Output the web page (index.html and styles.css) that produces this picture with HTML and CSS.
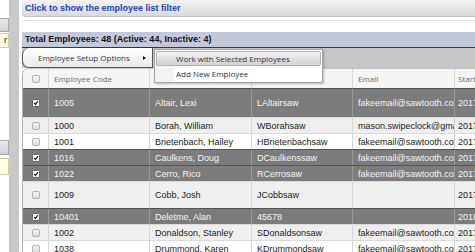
FILE: index.html
```html
<!DOCTYPE html>
<html>
<head>
<meta charset="utf-8">
<link rel="stylesheet" href="styles.css">
</head>
<body>
<div class="page">
  <aside class="side">
    <div class="side-btn btn-a"></div>
    <div class="side-note note-a">r</div>
    <div class="side-btn btn-b"></div>
    <div class="side-note note-b"></div>
  </aside>
  <div class="splitter"></div>
  <main class="main">
    <div class="banner">Click to show the employee list filter</div>
    <div class="rule"></div>
    <div class="total">Total Employees: 48 (Active: 44, Inactive: 4)</div>
    <div class="toolbar">
      <div class="menu-btn"><span>Employee Setup Options</span><span class="arrow"></span></div>
    </div>
    <div class="submenu">
      <div class="sub-item hover">Work with Selected Employees</div>
      <div class="sub-item">Add New Employee</div>
    </div>
    <div class="grid">
      <div class="row head">
        <div class="cell chk"><span class="cb"></span></div>
        <div class="cell">Employee Code</div>
        <div class="cell"></div>
        <div class="cell"></div>
        <div class="cell">Email</div>
        <div class="cell last">Start</div>
      </div>
      <div class="row sel tall">
        <div class="cell chk"><span class="cb on"><svg viewBox="0 0 8 8" width="8" height="8"><path d="M1.6 4.1 L3.3 5.9 L6.6 1.7" fill="none" stroke="#000" stroke-width="1.5"/></svg></span></div>
        <div class="cell">1005</div>
        <div class="cell">Altair, Lexi</div>
        <div class="cell">LAltairsaw</div>
        <div class="cell">fakeemail@sawtooth.com</div>
        <div class="cell last">2017</div>
      </div>
      <div class="row odd">
        <div class="cell chk"><span class="cb"></span></div>
        <div class="cell">1000</div>
        <div class="cell">Borah, William</div>
        <div class="cell">WBorahsaw</div>
        <div class="cell">mason.swipeclock@gmail.com</div>
        <div class="cell last">2017</div>
      </div>
      <div class="row">
        <div class="cell chk"><span class="cb"></span></div>
        <div class="cell">1001</div>
        <div class="cell">Brietenbach, Hailey</div>
        <div class="cell">HBrietenbachsaw</div>
        <div class="cell">fakeemail@sawtooth.com</div>
        <div class="cell last">2017</div>
      </div>
      <div class="row sel">
        <div class="cell chk"><span class="cb on"><svg viewBox="0 0 8 8" width="8" height="8"><path d="M1.6 4.1 L3.3 5.9 L6.6 1.7" fill="none" stroke="#000" stroke-width="1.5"/></svg></span></div>
        <div class="cell">1016</div>
        <div class="cell">Caulkens, Doug</div>
        <div class="cell">DCaulkenssaw</div>
        <div class="cell">fakeemail@sawtooth.com</div>
        <div class="cell last">2017</div>
      </div>
      <div class="row sel">
        <div class="cell chk"><span class="cb on"><svg viewBox="0 0 8 8" width="8" height="8"><path d="M1.6 4.1 L3.3 5.9 L6.6 1.7" fill="none" stroke="#000" stroke-width="1.5"/></svg></span></div>
        <div class="cell">1022</div>
        <div class="cell">Cerro, Rico</div>
        <div class="cell">RCerrosaw</div>
        <div class="cell">fakeemail@sawtooth.com</div>
        <div class="cell last">2017</div>
      </div>
      <div class="row odd mid">
        <div class="cell chk"><span class="cb"></span></div>
        <div class="cell">1009</div>
        <div class="cell">Cobb, Josh</div>
        <div class="cell">JCobbsaw</div>
        <div class="cell"></div>
        <div class="cell last">2017</div>
      </div>
      <div class="row sel">
        <div class="cell chk"><span class="cb on"><svg viewBox="0 0 8 8" width="8" height="8"><path d="M1.6 4.1 L3.3 5.9 L6.6 1.7" fill="none" stroke="#000" stroke-width="1.5"/></svg></span></div>
        <div class="cell">10401</div>
        <div class="cell">Deletme, Alan</div>
        <div class="cell">45678</div>
        <div class="cell"></div>
        <div class="cell last">2018</div>
      </div>
      <div class="row odd">
        <div class="cell chk"><span class="cb"></span></div>
        <div class="cell">1002</div>
        <div class="cell">Donaldson, Stanley</div>
        <div class="cell">SDonaldsonsaw</div>
        <div class="cell">fakeemail@sawtooth.com</div>
        <div class="cell last">2017</div>
      </div>
      <div class="row">
        <div class="cell chk"><span class="cb"></span></div>
        <div class="cell">1038</div>
        <div class="cell">Drummond, Karen</div>
        <div class="cell">KDrummondsaw</div>
        <div class="cell">fakeemail@sawtooth.com</div>
        <div class="cell last">2017</div>
      </div>
    </div>
  </main>
</div>
</body>
</html>
```
FILE: styles.css
```css
html, body { margin: 0; padding: 0; background: #fff; }
body { font-family: "Liberation Sans", Arial, sans-serif; }
.page { display: flex; height: 252px; overflow: hidden; }

.side { width: 9px; flex: none; overflow: hidden; display: flex; flex-direction: column; }
.side-btn { height: 14px; box-sizing: border-box; background: linear-gradient(#e8e8e8, #d2d2d2); border: 1px solid #a9a9a9; border-left: none; }
.btn-a { margin-top: 18px; }
.btn-b { margin-top: 92px; height: 15px; }
.side-note { height: 15px; box-sizing: border-box; background: #ffffe1; border: 1px solid #cfcfa8; border-left: none; margin-top: 1px; font: 9px/13px "Liberation Sans", sans-serif; color: #222; text-align: right; padding-right: 1px; }
.note-b { margin-top: 3px; height: 17px; }

.splitter { width: 10px; flex: none; background: #c9c9c9; margin-right: 3px; }

.main { flex: 1; min-width: 0; overflow: hidden; position: relative; }

.banner { height: 17px; box-sizing: border-box; padding-left: 3px; background: linear-gradient(#f3f3f3, #d9d9d9); border-bottom: 1px solid #c2c2c2; border-radius: 0 0 0 4px; color: #2143c4; font: bold 9px/16px "Liberation Sans", Arial, sans-serif; white-space: nowrap; }
.rule { height: 1px; background: #e4e4e4; margin-top: 3px; }
.total { margin-top: 11px; height: 15px; padding-left: 3px; background: #c3c9db; color: #111; font: bold 9px/15px "Liberation Sans", Arial, sans-serif; white-space: nowrap; }

.toolbar { border-top: 1px solid #383838; height: 20px; background: #c6c6c6; }
.menu-btn { width: 131px; height: 20px; box-sizing: border-box; border: 1px solid #595959; border-top: none; border-radius: 7px 0 0 7px; background: linear-gradient(#ffffff, #e8e8e8); display: flex; align-items: center; padding-left: 15px; font: 8px "Open Sans", sans-serif; color: #3a3a3a; white-space: nowrap; }
.arrow { margin-left: auto; margin-right: 6px; width: 0; height: 0; border-top: 2.5px solid transparent; border-bottom: 2.5px solid transparent; border-left: 3px solid #111; }

.submenu { position: absolute; left: 132px; top: 49px; width: 169px; box-sizing: border-box; background: linear-gradient(to right, #f3f3f3 0 19px, #fff 19px); border: 1px solid #a6a6a6; box-shadow: 1px 1px 2px rgba(0,0,0,0.25); padding: 1px; z-index: 2; }
.sub-item { height: 15px; box-sizing: border-box; padding-left: 20px; font: 8px/15px "Open Sans", sans-serif; color: #333; white-space: nowrap; }
.sub-item.hover { background: linear-gradient(#f2f2f2, #d3d3d3); border: 1px solid #b3b3b3; border-radius: 2px; padding-left: 19px; line-height: 13px; }

.grid { border-left: 1px solid #b0b0b0; border-top: 1px solid #c4c4c4; border-top-left-radius: 7px; overflow: hidden; width: max-content; }
.row { display: grid; grid-template-columns: 26px 101px 102px 101px 102px 80px; height: 16px; box-sizing: border-box; border-top: 1px solid #dadada; background: #fff; color: #222; font: 9px "Liberation Sans", Arial, sans-serif; }
.row.head { height: 19px; border-top: none; background: #f5f5f5; color: #6c6c6c; font: 8px "Open Sans", sans-serif; }
.row.odd { background: #efefef; }
.row.sel { background: #7c7c7c; color: #f4f4f4; border-top-color: #555; }
.row.tall { height: 29px; }
.row.mid { height: 27px; }
.cell { box-sizing: border-box; border-right: 1px solid #d6d6d6; padding-left: 5px; display: flex; align-items: center; overflow: hidden; white-space: nowrap; }
.row.sel .cell { border-right-color: #9a9a9a; }
.cell.chk { padding-left: 0; justify-content: center; }
.cell.last { padding-left: 3px; border-right: none; }

.cb { width: 8px; height: 8px; box-sizing: border-box; border: 1px solid #b4b4b4; border-radius: 2px; background: linear-gradient(#f6f6f6, #dcdcdc); display: flex; align-items: center; justify-content: center; }
.cb.on { background: #fff; border-color: #6a6a6a; border-radius: 1px; }
.cb svg { display: block; }
```
